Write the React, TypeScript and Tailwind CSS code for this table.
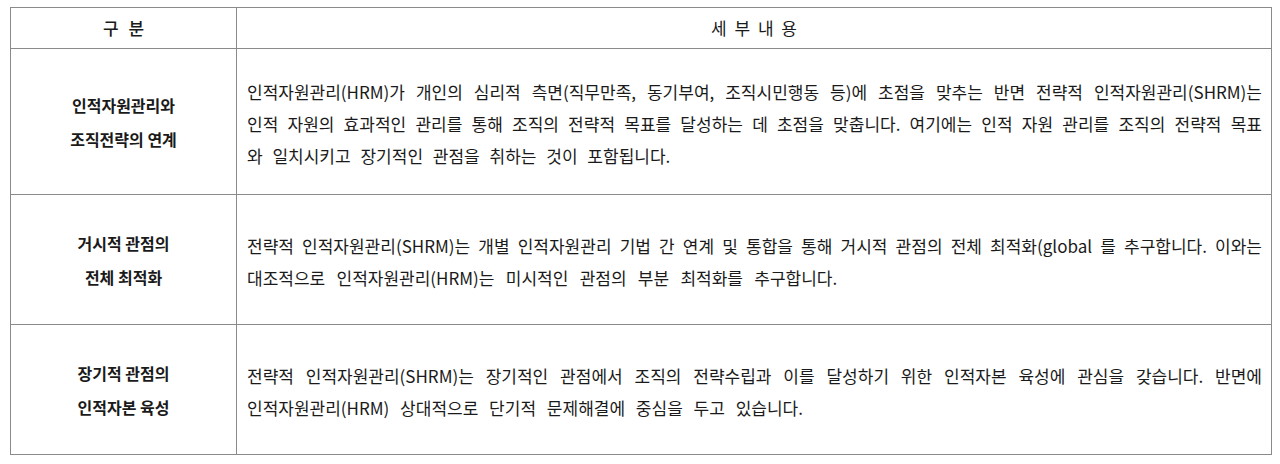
const rows = [
  {
    title: ['인적자원관리와', '조직전략의 연계'],
    lines: [
      '인적자원관리(HRM)가 개인의 심리적 측면(직무만족, 동기부여, 조직시민행동 등)에 초점을 맞추는 반면 전략적 인적자원관리(SHRM)는',
      '인적 자원의 효과적인 관리를 통해 조직의 전략적 목표를 달성하는 데 초점을 맞춥니다. 여기에는 인적 자원 관리를 조직의 전략적 목표',
      '와 일치시키고 장기적인 관점을 취하는 것이 포함됩니다.',
    ],
    lastSpacing: '[word-spacing:6px]',
    height: 'h-[146px]',
  },
  {
    title: ['거시적 관점의', '전체 최적화'],
    lines: [
      '전략적 인적자원관리(SHRM)는 개별 인적자원관리 기법 간 연계 및 통합을 통해 거시적 관점의 전체 최적화(global 를 추구합니다. 이와는',
      '대조적으로 인적자원관리(HRM)는 미시적인 관점의 부분 최적화를 추구합니다.',
    ],
    lastSpacing: '[word-spacing:7.5px]',
    height: 'h-[130px]',
  },
  {
    title: ['장기적 관점의', '인적자본 육성'],
    lines: [
      '전략적 인적자원관리(SHRM)는 장기적인 관점에서 조직의 전략수립과 이를 달성하기 위한 인적자본 육성에 관심을 갖습니다. 반면에',
      '인적자원관리(HRM) 상대적으로 단기적 문제해결에 중심을 두고 있습니다.',
    ],
    lastSpacing: '[word-spacing:7px]',
    height: 'h-[130px]',
  },
]

export default function App() {
  return (
    <div className="w-[1280px] h-[464px] bg-white pt-[7px] pl-[10px] font-['Noto_Sans_CJK_KR',sans-serif] text-[17px] text-[#1a1a1a]">
      <table className="w-[1262px] border-collapse table-fixed">
        <colgroup>
          <col className="w-[226px]" />
          <col />
        </colgroup>
        <thead>
          <tr className="h-[41px]">
            <th className="border border-[#8a8a8a] font-medium text-center align-middle [word-spacing:6px]">구 분</th>
            <th className="border border-[#8a8a8a] font-normal text-center align-middle [word-spacing:4px]">
              세 부 내 용
            </th>
          </tr>
        </thead>
        <tbody>
          {rows.map((row, i) => (
            <tr key={i} className={row.height}>
              <td className="border border-[#8a8a8a] text-center align-middle font-bold text-[16px] leading-[34px]">
                {row.title.map((t) => (
                  <div key={t}>{t}</div>
                ))}
              </td>
              <td className="border border-[#8a8a8a] align-middle pl-[10px] pr-[9px] pt-[4px] leading-[32px]">
                {row.lines.map((line, j) => (
                  <div
                    key={j}
                    className={
                      j < row.lines.length - 1
                        ? 'text-justify [text-align-last:justify] whitespace-nowrap'
                        : `text-left whitespace-nowrap ${row.lastSpacing}`
                    }
                  >
                    {line}
                  </div>
                ))}
              </td>
            </tr>
          ))}
        </tbody>
      </table>
    </div>
  )
}
